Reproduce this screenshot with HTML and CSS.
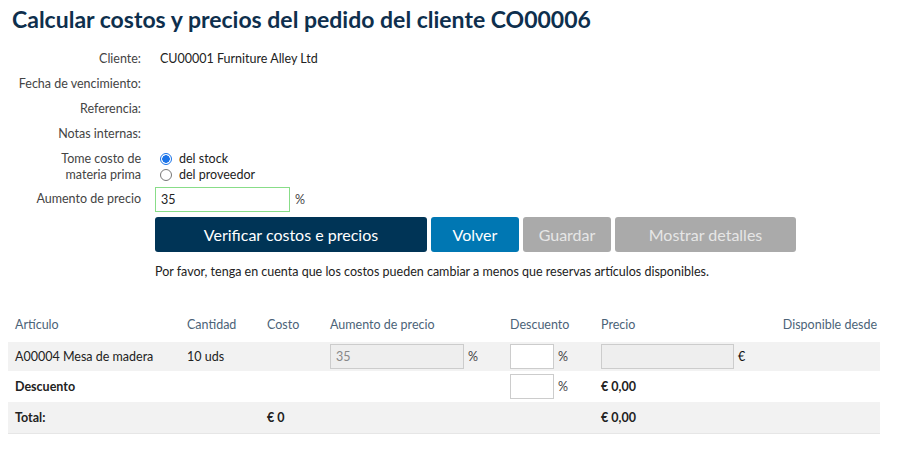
FILE: index.html
```html
<!DOCTYPE html>
<html lang="es">
<head>
<meta charset="utf-8">
<link rel="stylesheet" href="styles.css">
</head>
<body>
<div class="page">
  <h1 class="title">Calcular costos y precios del pedido del cliente CO00006</h1>
  <div class="form">
    <div class="label">Cliente:</div>
    <div class="value">CU00001 Furniture Alley Ltd</div>
    <div class="label">Fecha de vencimiento:</div>
    <div class="value"></div>
    <div class="label">Referencia:</div>
    <div class="value"></div>
    <div class="label">Notas internas:</div>
    <div class="value"></div>
    <div class="label label-multi">Tome costo de<br>materia prima</div>
    <div class="value radios">
      <label class="radio"><span class="dot checked"></span>del stock</label>
      <label class="radio"><span class="dot"></span>del proveedor</label>
    </div>
    <div class="label">Aumento de precio</div>
    <div class="value field"><span class="input green">35</span><span class="unit">%</span></div>
    <div></div>
    <div class="buttons">
      <button class="btn btn-dark">Verificar costos e precios</button>
      <button class="btn btn-blue">Volver</button>
      <button class="btn btn-grey">Guardar</button>
      <button class="btn btn-grey btn-wide">Mostrar detalles</button>
    </div>
    <div></div>
    <div class="note">Por favor, tenga en cuenta que los costos pueden cambiar a menos que reservas artículos disponibles.</div>
  </div>

  <table class="items">
    <thead>
      <tr>
        <th class="c1">Artículo</th>
        <th class="c2">Cantidad</th>
        <th class="c3">Costo</th>
        <th class="c4">Aumento de precio</th>
        <th class="c5">Descuento</th>
        <th class="c6">Precio</th>
        <th class="c7">Disponible desde</th>
      </tr>
    </thead>
    <tbody>
      <tr class="shade">
        <td>A00004 Mesa de madera</td>
        <td>10 uds</td>
        <td></td>
        <td><span class="tinput grey w-wide">35</span><span class="unit">%</span></td>
        <td><span class="tinput w-small"></span><span class="unit">%</span></td>
        <td><span class="tinput grey w-price"></span><span class="unit euro">€</span></td>
        <td></td>
      </tr>
      <tr>
        <td class="bold">Descuento</td>
        <td></td>
        <td></td>
        <td></td>
        <td><span class="tinput w-small"></span><span class="unit">%</span></td>
        <td class="bold">€ 0,00</td>
        <td></td>
      </tr>
      <tr class="shade total">
        <td class="bold">Total:</td>
        <td></td>
        <td class="bold">€ 0</td>
        <td></td>
        <td></td>
        <td class="bold">€ 0,00</td>
        <td></td>
      </tr>
    </tbody>
  </table>
</div>
</body>
</html>
```

FILE: styles.css
```css
* { box-sizing: border-box; }
body {
  margin: 0;
  font-family: "Lato", "Open Sans", sans-serif;
  font-size: 12.5px;
  color: #333;
  background: #fff;
}
.page { padding: 0 8px; }
.title {
  margin: 6px 0 0 4px;
  font-size: 23px;
  font-weight: 700;
  color: #0e2f4d;
  line-height: 27px;
}
.form {
  display: grid;
  grid-template-columns: 133px auto;
  column-gap: 14px;
  margin-top: 13px;
}
.label {
  text-align: right;
  color: #444;
  line-height: 25px;
}
.value {
  padding-left: 5px;
  line-height: 25px;
  color: #222;
}
.label-multi { line-height: 16px; padding-top: 5px; padding-bottom: 3px; }
.radios { display: flex; flex-direction: column; padding-top: 5px; padding-bottom: 3px; }
.radio { display: flex; align-items: center; line-height: 16px; color: #222; }
.dot {
  width: 12px; height: 12px; border-radius: 50%;
  border: 1px solid #767676; margin-right: 7px; background: #fff;
}
.dot.checked {
  border: 1px solid #1a73e8;
  background: radial-gradient(circle, #1a73e8 0 3.5px, #fff 4px);
}
.field { padding-left: 0; display: flex; align-items: center; margin-top: 1px; }
.input {
  display: inline-block;
  width: 135px; height: 25px;
  padding: 0 5px;
  border: 1px solid #88dd88;
  line-height: 23px;
  color: #222;
}
.unit { margin-left: 5px; color: #444; }
.buttons { display: flex; gap: 4px; margin-top: 5px; }
.btn {
  height: 35px;
  border: none;
  border-radius: 3px;
  font-family: inherit;
  font-size: 16px;
  color: #fff;
  padding: 0;
}
.btn-dark { background: #003456; width: 272px; }
.btn-blue { background: #0077b3; width: 88px; }
.btn-grey { background: #aaaaaa; color: #e6e6e6; width: 88px; }
.btn-wide { width: 181px; }
.note { margin-top: 12px; line-height: 16px; color: #222; }

.items {
  width: 872px;
  margin-top: 30px;
  border-collapse: collapse;
}
.items th {
  font-weight: 400;
  text-align: left;
  color: #4c6378;
  padding: 0 7px;
  height: 30px;
  vertical-align: middle;
  white-space: nowrap;
}
.items td { padding: 0 7px; height: 31px; color: #222; vertical-align: middle; white-space: nowrap; }
.items thead tr { border-bottom: 4px solid #fff; }
.c1 { width: 172px; }
.c2 { width: 80px; }
.c3 { width: 63px; }
.c4 { width: 180px; }
.c5 { width: 91px; }
.c6 { width: 170px; }
.items th.c7 { text-align: right; padding-right: 3px; }
.shade { background: #f2f2f2; }
.total { border-bottom: 1px solid #e6e6e6; }
.bold { font-weight: 700; color: #111; }
.tinput {
  display: inline-block;
  height: 25px;
  border: 1px solid #ccc;
  background: #fff;
  vertical-align: middle;
  padding: 0 5px;
  line-height: 23px;
  color: #888;
}
.tinput.grey { background: #eee; }
.w-wide { width: 134px; }
.w-small { width: 44px; }
.w-price { width: 133px; }
.items .unit { vertical-align: middle; margin-left: 4px; }
.euro { color: #111; }
```
